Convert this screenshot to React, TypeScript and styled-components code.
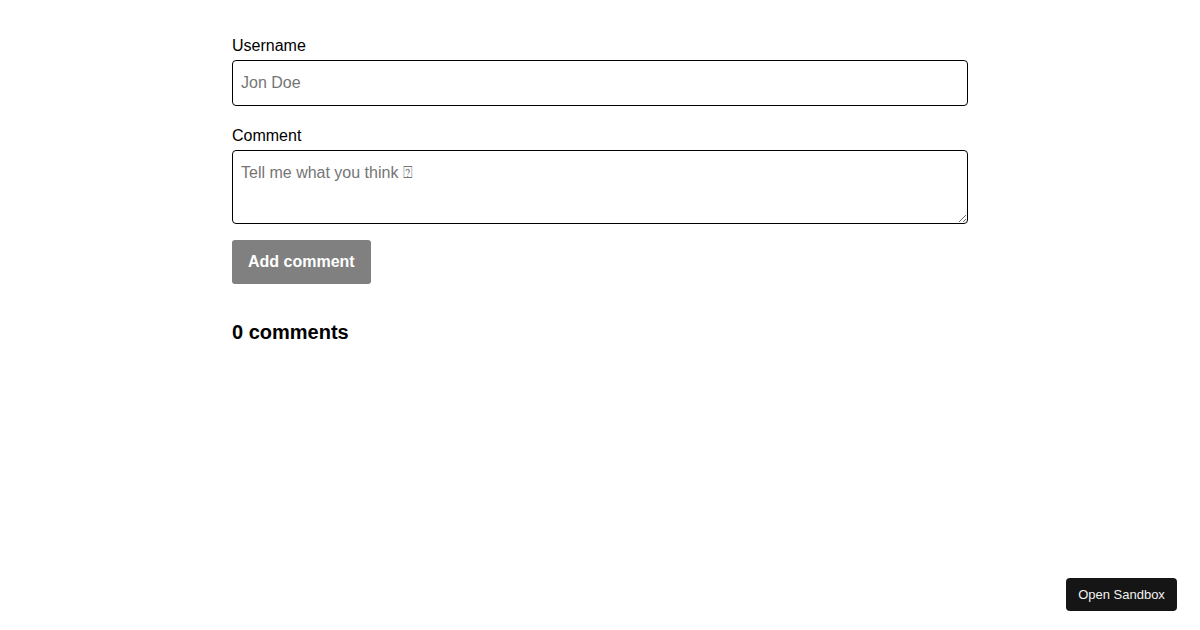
import React from "react";
import styled, { createGlobalStyle } from "styled-components";

const Global = createGlobalStyle`
  html, body { margin: 0; padding: 0; background: #fff; }
  body { font-family: "Liberation Sans", Arial, sans-serif; color: #000; }
`;

const Page = styled.div`
  width: 736px;
  margin: 0 auto;
  padding-top: 37px;
  display: flex;
  flex-direction: column;
`;

const Form = styled.form`
  display: flex;
  flex-direction: column;
  align-items: flex-start;
`;

const Label = styled.label<{ $top?: number }>`
  display: block;
  font-size: 16px;
  line-height: 18px;
  margin-top: ${(p) => p.$top ?? 0}px;
  margin-bottom: 5px;
`;

const Input = styled.input`
  box-sizing: border-box;
  width: 100%;
  height: 46px;
  padding: 0 8px;
  border: 1px solid #000;
  border-radius: 4px;
  font-family: "Liberation Sans", Arial, sans-serif;
  font-size: 16px;
  outline: none;
  &::placeholder { color: #757575; }
`;

const TextArea = styled.textarea`
  box-sizing: border-box;
  width: 100%;
  height: 74px;
  padding: 13px 8px 11px;
  border: 1px solid #000;
  border-radius: 4px;
  font-family: "Liberation Sans", Arial, sans-serif;
  font-size: 16px;
  line-height: 18px;
  outline: none;
  margin: 0;
  display: block;
  &::placeholder { color: #757575; }
`;

const SubmitButton = styled.button`
  margin-top: 16px;
  height: 44px;
  padding: 0 16px;
  border: none;
  border-radius: 3px;
  background: #808080;
  color: #fff;
  font-family: "Liberation Sans", Arial, sans-serif;
  font-size: 16px;
  font-weight: 700;
  cursor: pointer;
`;

const Heading = styled.h3`
  margin: 37px 0 0;
  font-size: 20px;
  line-height: 23px;
  font-weight: 700;
`;

const SandboxButton = styled.a`
  position: fixed;
  right: 23px;
  bottom: 19px;
  width: 111px;
  height: 33px;
  display: flex;
  align-items: center;
  justify-content: center;
  background: #151515;
  color: #f2f2f2;
  border-radius: 4px;
  font-family: "Liberation Sans", Arial, sans-serif;
  font-size: 13px;
  text-decoration: none;
`;

export default function App() {
  return (
    <>
      <Global />
      <Page>
        <Form onSubmit={(e) => e.preventDefault()}>
          <Label htmlFor="username">Username</Label>
          <Input id="username" placeholder="Jon Doe" />
          <Label htmlFor="comment" $top={21}>Comment</Label>
          <TextArea id="comment" placeholder={"Tell me what you think \u2370"} />
          <SubmitButton type="submit">Add comment</SubmitButton>
        </Form>
        <Heading>0 comments</Heading>
      </Page>
      <SandboxButton href="#">Open Sandbox</SandboxButton>
    </>
  );
}
